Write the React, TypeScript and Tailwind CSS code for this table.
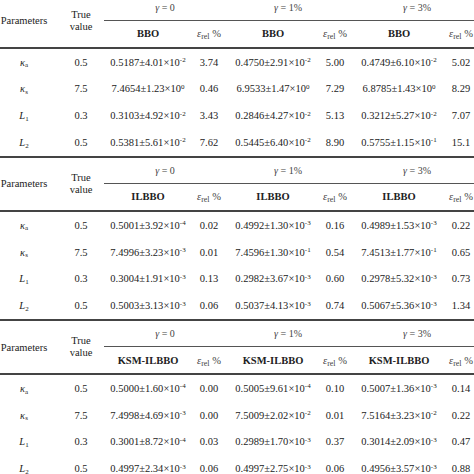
// Three stacked result tables (BBO / ILBBO / KSM-ILBBO) with noise levels γ.

type Cell = [string, string, string]; // mantissa±sd, exponent, eps
type Row = { p: string; sub: string; tv: string; cells: Cell[] };

const params = [
  { p: "κ", sub: "a", tv: "0.5" },
  { p: "κ", sub: "s", tv: "7.5" },
  { p: "L", sub: "1", tv: "0.3" },
  { p: "L", sub: "2", tv: "0.5" },
];

const tables: { method: string; data: Cell[][] }[] = [
  {
    method: "BBO",
    data: [
      [["0.5187±4.01", "-2", "3.74"], ["0.4750±2.91", "-2", "5.00"], ["0.4749±6.10", "-2", "5.02"]],
      [["7.4654±1.23", "0", "0.46"], ["6.9533±1.47", "0", "7.29"], ["6.8785±1.43", "0", "8.29"]],
      [["0.3103±4.92", "-2", "3.43"], ["0.2846±4.27", "-2", "5.13"], ["0.3212±5.27", "-2", "7.07"]],
      [["0.5381±5.61", "-2", "7.62"], ["0.5445±6.40", "-2", "8.90"], ["0.5755±1.15", "-1", "15.1"]],
    ],
  },
  {
    method: "ILBBO",
    data: [
      [["0.5001±3.92", "-4", "0.02"], ["0.4992±1.30", "-3", "0.16"], ["0.4989±1.53", "-3", "0.22"]],
      [["7.4996±3.23", "-3", "0.01"], ["7.4596±1.30", "-1", "0.54"], ["7.4513±1.77", "-1", "0.65"]],
      [["0.3004±1.91", "-3", "0.13"], ["0.2982±3.67", "-3", "0.60"], ["0.2978±5.32", "-3", "0.73"]],
      [["0.5003±3.13", "-3", "0.06"], ["0.5037±4.13", "-3", "0.74"], ["0.5067±5.36", "-3", "1.34"]],
    ],
  },
  {
    method: "KSM-ILBBO",
    data: [
      [["0.5000±1.60", "-4", "0.00"], ["0.5005±9.61", "-4", "0.10"], ["0.5007±1.36", "-3", "0.14"]],
      [["7.4998±4.69", "-3", "0.00"], ["7.5009±2.02", "-2", "0.01"], ["7.5164±3.23", "-2", "0.22"]],
      [["0.3001±8.72", "-4", "0.03"], ["0.2989±1.70", "-3", "0.37"], ["0.3014±2.09", "-3", "0.47"]],
      [["0.4997±2.34", "-3", "0.06"], ["0.4997±2.75", "-3", "0.06"], ["0.4956±3.57", "-3", "0.88"]],
    ],
  },
];

function Eps() {
  return (
    <span className="text-[#444] text-[10.5px]">
      <i>ε</i>
      <sub className="text-[8px]">rel</sub> %
    </span>
  );
}

function Gamma({ v }: { v: string }) {
  return (
    <span className="text-[#444] text-[10px]">
      <i>γ</i> = {v}
    </span>
  );
}

function ResultTable({ method, data }: { method: string; data: Cell[][] }) {
  const rows: Row[] = params.map((p, i) => ({ ...p, cells: data[i] }));
  return (
    <div>
      <div className="h-[2px] bg-[#444]" />
      <div className="grid grid-cols-[58px_46px_88px_34px_94px_30px_98px_26px] grid-rows-[26px_28px_repeat(4,26.8px)] items-center text-center">
        <div className="row-span-2 self-stretch flex items-center justify-center pr-[10px] border-b-2 border-[#444] whitespace-nowrap">
          Parameters
        </div>
        <div className="row-span-2 self-stretch flex items-center justify-center border-b-2 border-[#444] leading-[12px]">
          True
          <br />
          value
        </div>
        <div className="col-span-2 self-stretch flex items-center justify-center border-b border-[#555]">
          <Gamma v="0" />
        </div>
        <div className="col-span-2 self-stretch flex items-center justify-center border-b border-[#555]">
          <Gamma v="1%" />
        </div>
        <div className="col-span-2 self-stretch flex items-center justify-center pl-[10px] border-b border-[#555]">
          <Gamma v="3%" />
        </div>

        {[0, 1, 2].map((g) => (
          <div key={g} className="contents">
            <div className="self-stretch flex items-center justify-center font-bold border-b-2 border-[#444] whitespace-nowrap">
              {method}
            </div>
            <div className="self-stretch flex items-center justify-center border-b-2 border-[#444] whitespace-nowrap">
              <Eps />
            </div>
          </div>
        ))}

        {rows.map((r) => (
          <div key={r.p + r.sub} className="contents">
            <div className="pr-[10px]">
              <i>{r.p}</i>
              <sub className="text-[7px]">{r.sub}</sub>
            </div>
            <div>{r.tv}</div>
            {r.cells.map((c, j) => (
              <div key={j} className="contents">
                <div className="whitespace-nowrap">
                  {c[0]}×10<sup className="text-[7px]">{c[1]}</sup>
                </div>
                <div className="whitespace-nowrap">{c[2]}</div>
              </div>
            ))}
          </div>
        ))}
      </div>
    </div>
  );
}

export default function App() {
  return (
    <div
      className="w-[474px] h-[474px] overflow-hidden bg-white text-[10.5px] text-[#222]"
      style={{ fontFamily: '"Liberation Serif", "Times New Roman", serif' }}
    >
      <div className="-mt-[7px]">
        {tables.map((t) => (
          <ResultTable key={t.method} method={t.method} data={t.data} />
        ))}
      </div>
    </div>
  );
}
